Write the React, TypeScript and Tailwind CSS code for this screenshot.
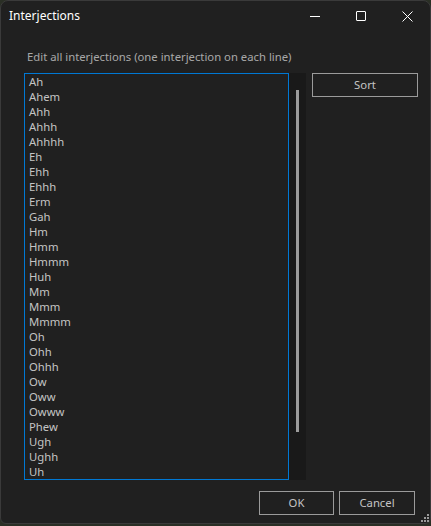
import React from "react";

const items = [
  "Ah","Ahem","Ahh","Ahhh","Ahhhh","Eh","Ehh","Ehhh","Erm","Gah","Hm","Hmm","Hmmm","Huh",
  "Mm","Mmm","Mmmm","Oh","Ohh","Ohhh","Ow","Oww","Owww","Phew","Ugh","Ughh","Uh",
];

export default function App() {
  return (
    <div
      className="w-[431px] h-[526px] bg-[#2a2f25] overflow-hidden"
      style={{ fontFamily: '"Noto Sans", "Open Sans", Arial, sans-serif' }}
    >
      <div className="relative w-[431px] h-[524px] bg-[#202020] border border-[#3a3a3a] rounded-t-[8px] rounded-b-[6px] flex flex-col">
        {/* title bar */}
        <div className="h-[30px] flex items-center shrink-0">
          <div className="pl-[8px] text-[12px] text-white flex-1 leading-none">Interjections</div>
          <div className="flex h-full">
            <div className="w-[46px] h-full flex items-center justify-center">
              <div className="w-[10px] h-[1px] bg-white" />
            </div>
            <div className="w-[46px] h-full flex items-center justify-center">
              <div className="w-[10px] h-[10px] border border-white rounded-[1px]" />
            </div>
            <div className="w-[46px] h-full flex items-center justify-center">
              <svg width="11" height="11" viewBox="0 0 11 11">
                <path d="M0.5 0.5 L10.5 10.5 M10.5 0.5 L0.5 10.5" stroke="white" strokeWidth="1" />
              </svg>
            </div>
          </div>
        </div>

        {/* body */}
        <div className="flex-1 flex flex-col pl-[23px] pr-[12px]">
          <div className="mt-[18px] pl-[3px] text-[11.3px] leading-[16px] text-[#a8a8a8]">
            Edit all interjections (one interjection on each line)
          </div>
          <div className="mt-[8px] flex">
            <div className="flex">
              <div className="w-[265px] h-[407px] border border-[#0078d4] overflow-hidden px-[4px] pt-[0px]">
                {items.map((t) => (
                  <div key={t} className="text-[11.3px] leading-[15px] text-[#c4c4c4]">
                    {t}
                  </div>
                ))}
              </div>
              <div className="w-[17px] h-[407px] bg-[#191919] flex justify-center pt-[17px]">
                <div className="w-[3px] h-[342px] bg-[#9c9c9c]" />
              </div>
            </div>
            <div className="ml-[6px]">
              <div className="w-[106px] h-[24px] border border-[#9b9b9b] flex items-center justify-center text-[11.3px] text-[#c4c4c4]">
                Sort
              </div>
            </div>
          </div>
          <div className="mt-[11px] flex justify-end gap-[5px] pr-[3px]">
            <div className="w-[75px] h-[24px] border border-[#9b9b9b] flex items-center justify-center text-[11.3px] text-[#c4c4c4]">
              OK
            </div>
            <div className="w-[76px] h-[24px] border border-[#9b9b9b] flex items-center justify-center text-[11.3px] text-[#c4c4c4]">
              Cancel
            </div>
          </div>
        </div>

        {/* resize grip */}
        <svg className="absolute right-[1px] bottom-[1px]" width="9" height="9" viewBox="0 0 9 9">
          <rect x="7" y="1" width="2" height="2" fill="#9a9a9a" />
          <rect x="4" y="4" width="2" height="2" fill="#9a9a9a" />
          <rect x="7" y="4" width="2" height="2" fill="#9a9a9a" />
          <rect x="1" y="7" width="2" height="2" fill="#9a9a9a" />
          <rect x="4" y="7" width="2" height="2" fill="#9a9a9a" />
          <rect x="7" y="7" width="2" height="2" fill="#9a9a9a" />
        </svg>
      </div>
    </div>
  );
}
